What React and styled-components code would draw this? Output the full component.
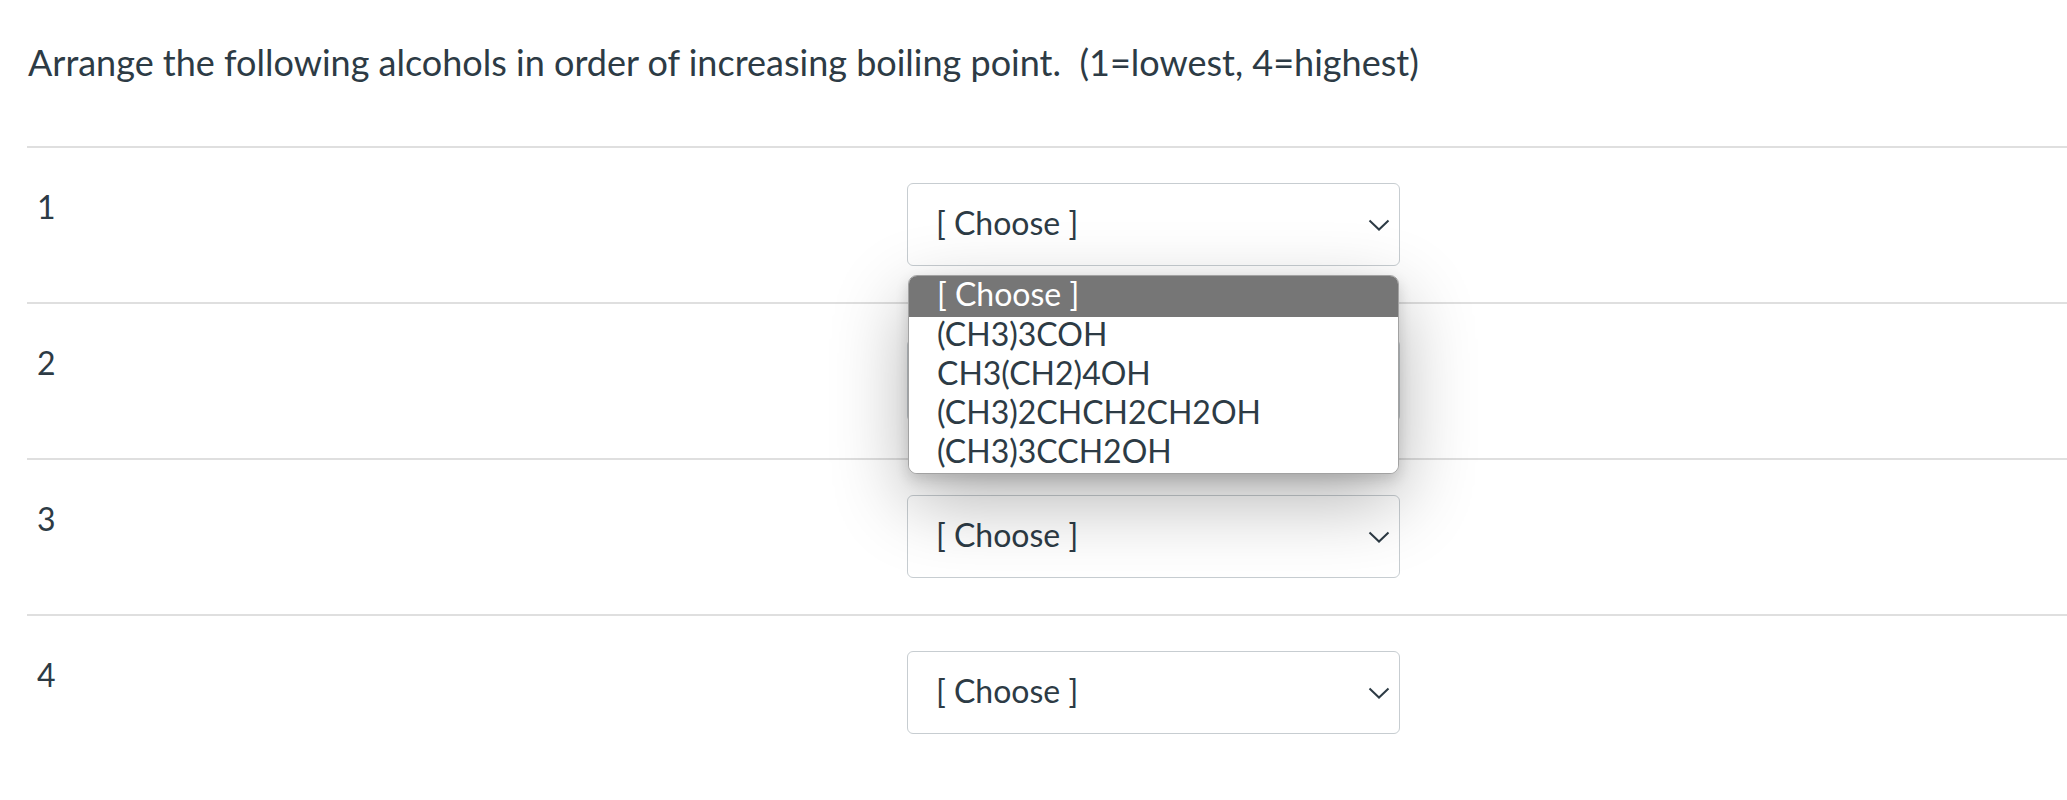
import React from "react";
import styled, { createGlobalStyle } from "styled-components";

const GlobalStyle = createGlobalStyle`
  html, body {
    margin: 0;
    padding: 0;
    background: #ffffff;
  }
  body {
    font-family: Lato, "Noto Sans", sans-serif;
    color: #2d3b45;
  }
`;

const Page = styled.div`
  padding: 41px 0 0 27px;
`;

const Question = styled.div`
  font-size: 36px;
  line-height: 43px;
  margin: 0 0 62px 1px;
  color: #2d3b45;
`;

const Table = styled.div`
  display: flex;
  flex-direction: column;
`;

const Row = styled.div`
  display: grid;
  grid-template-columns: 880px 493px;
  align-items: start;
  border-top: 2px solid #dfdfdf;
  padding: 35px 0 36px 0;
`;

const Num = styled.div`
  font-size: 32px;
  line-height: 38px;
  padding: 5px 0 0 10px;
  color: #2d3b45;
`;

const SelectCell = styled.div`
  position: relative;
`;

const SelectBox = styled.div`
  box-sizing: border-box;
  height: 83px;
  width: 493px;
  display: flex;
  align-items: center;
  justify-content: space-between;
  padding: 0 9px 4px 28px;
  border: 1px solid #c7cdd1;
  border-radius: 6px;
  background: #ffffff;
  font-size: 32px;
  color: #2d3b45;
`;

const Chevron = styled.svg`
  width: 22px;
  height: 12px;
  margin-top: 4px;
  flex: none;
`;

const Menu = styled.div`
  position: absolute;
  top: calc(100% + 9px);
  left: 1px;
  width: 491px;
  box-sizing: border-box;
  z-index: 10;
  background: #ffffff;
  border: 1px solid #a2a2a2;
  border-radius: 9px;
  overflow: hidden;
  box-shadow: 0 26px 76px rgba(0, 0, 0, 0.3), 0 6px 14px rgba(0, 0, 0, 0.14);
`;

const Option = styled.div`
  height: ${(p) => (p.$active ? "41px" : "39px")};
  line-height: 34px;
  padding: ${(p) => (p.$active ? "1px" : "0")} 0 0 28px;
  box-sizing: border-box;
  font-size: 32px;
  white-space: nowrap;
  background: ${(p) => (p.$active ? "#767676" : "#ffffff")};
  color: ${(p) => (p.$active ? "#ffffff" : "#2d3b45")};
`;

const options = [
  "[ Choose ]",
  "(CH3)3COH",
  "CH3(CH2)4OH",
  "(CH3)2CHCH2CH2OH",
  "(CH3)3CCH2OH",
];

function Select({ open }) {
  return (
    <SelectCell>
      <SelectBox>
        <span>[ Choose ]</span>
        <Chevron viewBox="0 0 22 12">
          <polyline
            points="1.5,1.5 11,10.5 20.5,1.5"
            fill="none"
            stroke="#2d3b45"
            strokeWidth="2"
          />
        </Chevron>
      </SelectBox>
      {open && (
        <Menu>
          {options.map((o, i) => (
            <Option key={o} $active={i === 0}>
              {o}
            </Option>
          ))}
        </Menu>
      )}
    </SelectCell>
  );
}

export default function App() {
  return (
    <>
      <GlobalStyle />
      <Page>
        <Question>
          Arrange the following alcohols in order of increasing boiling point.{"\u00a0 "}(1=lowest, 4=highest)
        </Question>
        <Table>
          {[1, 2, 3, 4].map((n) => (
            <Row key={n}>
              <Num>{n}</Num>
              <Select open={n === 1} />
            </Row>
          ))}
        </Table>
      </Page>
    </>
  );
}
